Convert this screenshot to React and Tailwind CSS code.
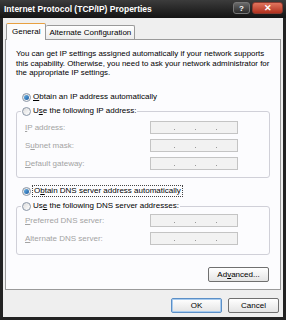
import React from "react"

const font = { fontFamily: '"Liberation Sans", Arial, sans-serif' }

const Radio = ({ checked }) => (
  <span className="inline-flex items-center justify-center w-[9px] h-[9px] rounded-full border border-[#8a96a6] bg-gradient-to-br from-[#dcdcdc] to-[#ffffff] shrink-0">
    {checked && <span className="w-[5px] h-[5px] rounded-full bg-gradient-to-br from-[#6ab4e8] to-[#1a5aa0]" />}
  </span>
)

const IpField = () => (
  <div className="relative w-[88px] h-[13px] border border-[#c4c4c4] bg-[#f2f2f2]">
    <span className="absolute left-[23px] top-[7px] w-px h-px bg-[#9a9a9a]" />
    <span className="absolute left-[44px] top-[7px] w-px h-px bg-[#9a9a9a]" />
    <span className="absolute left-[65px] top-[7px] w-px h-px bg-[#9a9a9a]" />
  </div>
)

const FieldRow = ({ label, k, rest, className }) => (
  <div className={`flex items-center justify-between pl-[8px] pr-[31px] ${className || ""}`}>
    <span className="text-[#a3a3a3]">
      {label}
      <u>{k}</u>
      {rest}
    </span>
    <IpField />
  </div>
)

const Button = ({ children, focused, className }) => (
  <button
    className={`h-[15px] rounded-[2px] border bg-gradient-to-b from-[#ffffff] to-[#e4e4e4] text-[8px] leading-none text-black ${
      focused ? "border-[#5b8fc7] shadow-[inset_0_0_0_1px_#a8cbee]" : "border-[#707070]"
    } ${className || ""}`}
  >
    {children}
  </button>
)

export default function App() {
  return (
    <div className="w-[286px] h-[320px] bg-[#232323] flex flex-col text-[8px] leading-[10px] text-black" style={font}>
      {/* Title bar */}
      <div className="h-[18px] flex items-center justify-between pl-[4px] pr-[3px] bg-gradient-to-b from-[#3c3c3c] to-[#141414]">
        <span className="text-white font-bold text-[8.5px]">Internet Protocol (TCP/IP) Properties</span>
        <div className="flex gap-[2px] items-center -mt-[3px]">
          <span className="w-[17px] h-[12px] rounded-[3px] border border-[#777] bg-gradient-to-b from-[#6a6a6a] to-[#2c2c2c] text-white font-bold text-[8px] leading-[11px] text-center">?</span>
          <span className="w-[31px] h-[12px] rounded-[3px] border border-[#8a3a30] bg-gradient-to-b from-[#e0745e] to-[#b22f1c] text-white font-bold text-[9px] leading-[11px] text-center">✕</span>
        </div>
      </div>

      {/* Body */}
      <div className="flex-1 mx-[3px] mb-[3px] bg-[#efefef] flex flex-col px-[2px]">
        {/* Tabs */}
        <div className="flex items-end h-[20px] mt-[1px] pl-[1px]">
          <div className="h-[17px] px-[5px] flex items-center border border-b-0 border-[#9a9a9a] rounded-t-[2px] bg-[#fcfcfc] relative top-px z-10 border-t-[#e8a040]">
            General
          </div>
          <div className="h-[14px] px-[3px] flex items-center border border-b-0 border-l-0 border-[#9a9a9a] rounded-t-[2px] bg-gradient-to-b from-[#ffffff] to-[#ececec]">
            Alternate Configuration
          </div>
        </div>

        {/* Panel */}
        <div className="h-[251px] border border-[#9a9a9a] bg-[#fcfcfe] flex flex-col pl-[10px] pr-[6px]">
          <p className="mt-[9px] leading-[9.7px] text-[7.9px]">
            You can get IP settings assigned automatically if your network supports this capability. Otherwise, you need to ask your network administrator for the appropriate IP settings.
          </p>

          <div className="flex items-center gap-[2px] mt-[14px] pl-[6px]">
            <Radio checked />
            <span>
              <u>O</u>btain an IP address automatically
            </span>
          </div>

          <fieldset className="mt-[4px] mr-[4px] border border-[#d0d0d8] rounded-[3px] h-[72px]">
            <legend className="ml-[4px] px-[1px] flex items-center gap-[2px]">
              <Radio />
              <span>
                U<u>s</u>e the following IP address:
              </span>
            </legend>
            <FieldRow label="" k="I" rest="P address:" className="mt-[5px]" />
            <FieldRow label="S" k="u" rest="bnet mask:" className="mt-[5px]" />
            <FieldRow label="" k="D" rest="efault gateway:" className="mt-[5px]" />
          </fieldset>

          <div className="flex items-center gap-[2px] mt-[8px] pl-[6px]">
            <Radio checked />
            <span className="outline outline-1 outline-dotted outline-[#444] px-px">
              O<u>b</u>tain DNS server address automatically
            </span>
          </div>

          <fieldset className="mt-[5px] mr-[4px] border border-[#d0d0d8] rounded-[3px] h-[54px]">
            <legend className="ml-[4px] px-[1px] flex items-center gap-[2px]">
              <Radio />
              <span>
                Us<u>e</u> the following DNS server addresses:
              </span>
            </legend>
            <FieldRow label="" k="P" rest="referred DNS server:" className="mt-[3px]" />
            <FieldRow label="" k="A" rest="lternate DNS server:" className="mt-[5px]" />
          </fieldset>

          <div className="flex justify-end mt-[12px] pr-[5px]">
            <Button className="w-[61px]">
              Ad<u>v</u>anced...
            </Button>
          </div>
        </div>

        {/* Dialog buttons */}
        <div className="flex justify-end gap-[6px] mt-[8px] pr-[2px]">
          <Button focused className="w-[51px]">OK</Button>
          <Button className="w-[51px]">Cancel</Button>
        </div>
      </div>
    </div>
  )
}
